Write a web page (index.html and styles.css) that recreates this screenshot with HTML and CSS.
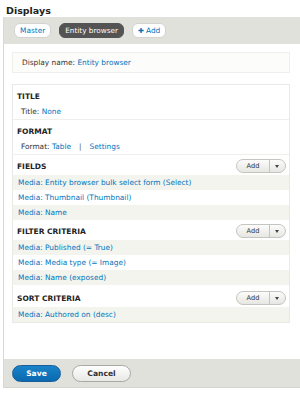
FILE: index.html
```html
<!DOCTYPE html>
<html lang="en">
<head>
    <meta charset="UTF-8">
    <meta name="viewport" content="width=device-width, initial-scale=1.0">
    <title>Displays</title>
    <link rel="stylesheet" href="styles.css">
</head>
<body>
    <h2 class="titulo">Displays</h2>
    <div class="views">
        <div class="abas">
            <a class="aba">Master</a>
            <a class="aba ativa">Entity browser</a>
            <a class="aba"><span class="mais">&#10010;</span>Add</a>
        </div>
        <div class="corpo">
            <div class="nome">
                <span class="rotulo">Display name:</span> <a class="link">Entity browser</a>
            </div>
            <div class="painel">
                <div class="secao linha-base">
                    <h3>Title</h3>
                    <div class="valor"><span class="rotulo">Title:</span> <a class="link">None</a></div>
                </div>
                <div class="secao linha-base">
                    <h3>Format</h3>
                    <div class="valor"><span class="rotulo">Format:</span> <a class="link">Table</a><span class="barra">|</span><a class="link">Settings</a></div>
                </div>
                <div class="secao">
                    <h3>Fields <span class="add"><span class="add-txt">Add</span><span class="add-seta"></span></span></h3>
                    <div class="item par">Media: Entity browser bulk select form (Select)</div>
                    <div class="item">Media: Thumbnail (Thumbnail)</div>
                    <div class="item par">Media: Name</div>
                </div>
                <div class="secao">
                    <h3>Filter criteria <span class="add"><span class="add-txt">Add</span><span class="add-seta"></span></span></h3>
                    <div class="item par">Media: Published (= True)</div>
                    <div class="item">Media: Media type (= Image)</div>
                    <div class="item par">Media: Name (exposed)</div>
                </div>
                <div class="secao ultima">
                    <h3>Sort criteria <span class="add"><span class="add-txt">Add</span><span class="add-seta"></span></span></h3>
                    <div class="item par">Media: Authored on (desc)</div>
                </div>
            </div>
        </div>
        <div class="acoes">
            <button class="salvar">Save</button>
            <button class="cancelar">Cancel</button>
        </div>
    </div>
</body>
</html>
```

FILE: styles.css
```css
*{
    margin: 0;
    padding: 0;
    box-sizing: border-box;
}
body{
    font-family: "DejaVu Sans", Verdana, sans-serif;
    font-size: 7.4px;
    color: #333;
    background: #fff;
}
.titulo{
    font-size: 9.5px;
    font-weight: bold;
    color: #222;
    padding: 5px 0 0 6px;
    line-height: 12px;
}
.views{
    margin-left: 3px;
    border-left: 1px solid #d8d8d4;
}
.link{color: #0074bd;}
.rotulo{color: #333;}

.abas{
    background: #e1e1dc;
    display: flex;
    gap: 8px;
    padding: 6px 10px;
}
.aba{
    display: flex;
    align-items: center;
    height: 15px;
    padding: 0 5px;
    border-radius: 6px;
    background: #fff;
    border: 1px solid #d3d3cf;
    color: #0074bd;
    font-size: 7.4px;
}
.aba.ativa{
    background: #545454;
    border-color: #545454;
    color: #fff;
    padding: 0 5px;
    font-size: 7.3px;
}
.mais{
    font-size: 7px;
    font-weight: bold;
    margin-right: 2px;
}

.corpo{
    padding: 8px 10px 36px 8px;
}
.nome{
    height: 21px;
    line-height: 20px;
    padding-left: 9px;
    background: #fcfcfa;
    border: 1px solid #efefec;
}
.painel{
    margin-top: 11px;
    border: 1px solid #e9e9e6;
}
.secao h3{
    display: flex;
    align-items: center;
    justify-content: space-between;
    height: 20px;
    padding: 2px 3px 0 4px;
    font-size: 7.5px;
    font-weight: bold;
    text-transform: uppercase;
    color: #222;
}
.linha-base{border-bottom: 1px solid #efefec;}
.valor{
    line-height: 14px;
    padding-left: 8px;
}
.barra{
    color: #555;
    margin: 0 8px;
}
.item{
    line-height: 15px;
    padding-left: 5px;
    color: #0074bd;
}
.item.par{background: #f3f4ee;}
.ultima{margin-top: 2px;}

.add{
    display: flex;
    height: 14px;
    border: 1px solid #c4c4c0;
    border-radius: 8px;
    background: linear-gradient(#fcfcfb, #e6e6e2);
    text-transform: none;
    font-weight: normal;
    font-size: 6.6px;
    color: #333;
}
.add-txt{
    width: 33px;
    text-align: center;
    line-height: 12px;
    border-right: 1px solid #c4c4c0;
}
.add-seta{
    width: 15px;
    position: relative;
}
.add-seta::after{
    content: "";
    position: absolute;
    left: 5px;
    top: 5px;
    border-left: 2.5px solid transparent;
    border-right: 2.5px solid transparent;
    border-top: 3px solid #444;
}

.acoes{
    background: #e1e1dc;
    height: 29px;
    display: flex;
    align-items: center;
    gap: 11px;
    padding: 0 8px;
    border-bottom: 1px solid #d3d3cf;
}
button{
    font-family: "DejaVu Sans", Verdana, sans-serif;
    font-weight: bold;
    font-size: 7.6px;
    height: 17px;
    border-radius: 9px;
    cursor: pointer;
}
.salvar{
    width: 49px;
    color: #fff;
    background: linear-gradient(#1a83c9, #0a69b0);
    border: 1px solid #1a5f9a;
}
.cancelar{
    width: 59px;
    color: #333;
    background: linear-gradient(#fefefe, #e8e8e6);
    border: 1px solid #a8a8a4;
}
```
